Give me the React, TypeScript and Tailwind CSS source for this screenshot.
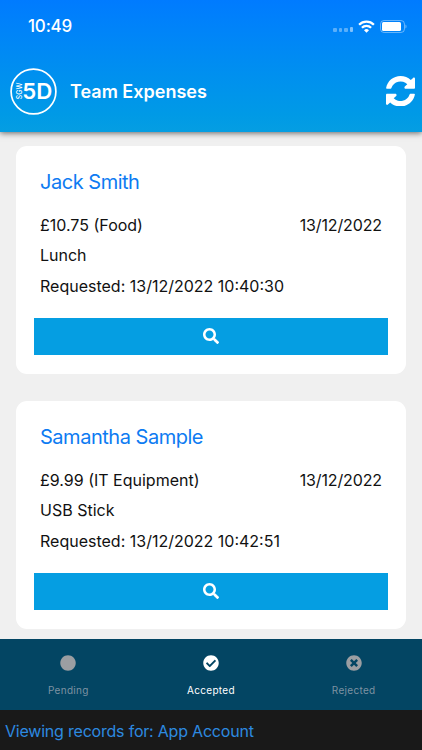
import type { ReactNode } from "react";
import { FaCheckCircle, FaCircle, FaSearch, FaTimesCircle } from "react-icons/fa";

type Expense = {
  name: string;
  amount: string;
  date: string;
  description: string;
  requested: string;
};

const expenses: Expense[] = [
  {
    name: "Jack Smith",
    amount: "£10.75 (Food)",
    date: "13/12/2022",
    description: "Lunch",
    requested: "13/12/2022 10:40:30",
  },
  {
    name: "Samantha Sample",
    amount: "£9.99 (IT Equipment)",
    date: "13/12/2022",
    description: "USB Stick",
    requested: "13/12/2022 10:42:51",
  },
];

function StatusBar() {
  return (
    <div className="flex h-[52px] items-center justify-between pl-7 pr-[15px] text-white">
      <span className="text-[17px] font-medium leading-none tracking-[-0.2px]">10:49</span>
      <div className="flex items-center">
        <div className="mt-[7px] flex items-end gap-[2px]">
          <i className="h-[3.5px] w-[3.5px] rounded-[1px] bg-white/35" />
          <i className="h-[3.5px] w-[3.5px] rounded-[1px] bg-white/35" />
          <i className="h-[3.5px] w-[3.5px] rounded-[1px] bg-white/35" />
          <i className="h-[4.5px] w-[3.5px] rounded-[1px] bg-white/50" />
        </div>
        <svg className="ml-[5px] h-[13px] w-[17px]" viewBox="0 0 17 13" fill="none" stroke="currentColor" strokeWidth="2.3">
          <path d="M1.1 4.7a10.5 10.5 0 0 1 14.8 0" />
          <path d="M3.9 7.7a6.5 6.5 0 0 1 9.2 0" />
          <path d="M8.5 12.8 6 10.2a3.6 3.6 0 0 1 5 0Z" fill="currentColor" stroke="none" />
        </svg>
        <svg className="ml-[5px] h-[13px] w-[27px]" viewBox="0 0 27 13">
          <rect x="0.5" y="0.5" width="24" height="12" rx="3.6" fill="none" stroke="white" strokeOpacity="0.4" />
          <rect x="2" y="2" width="19" height="9" rx="1.5" fill="white" />
          <path d="M25.5 4.5c1.3.5 1.3 3.5 0 4Z" fill="white" fillOpacity="0.5" />
        </svg>
      </div>
    </div>
  );
}

function Logo() {
  return (
    <svg className="h-[47px] w-[47px]" viewBox="0 0 47 47" fontFamily="Inter, sans-serif" fill="white">
      <circle cx="23.5" cy="23.5" r="22.4" fill="none" stroke="white" strokeWidth="1.7" />
      <text x="-31.2" y="11.6" transform="rotate(-90)" fontSize="7.2" fontWeight="500" textLength="16.5" lengthAdjust="spacingAndGlyphs">SGW</text>
      <text x="12.2" y="31" fontSize="21.8" fontWeight="600" textLength="30" lengthAdjust="spacingAndGlyphs">5D</text>
    </svg>
  );
}

function RefreshIcon() {
  const arrow =
    "M.9 12.8A.8.8 0 0 1 .1 11.9C1.4 5 7.4 0 14.5 0c4 0 7.600 1.500 10.300 4l2.300-2.100c.7-.7 1.900-.2 1.900.8v9c0 .6-.5 1.100-1.100 1.100h-8.200c-1.200 0-1.700-1.400-.9-2.200l2.500-2.300A9.600 9.600 0 0 0 5.400 12.100c-.1.4-.4.7-.8.7Z";
  return (
    <svg className="h-[30.5px] w-[29px]" viewBox="0 0 29 30.5" fill="currentColor">
      <path d={arrow} />
      <path d={arrow} transform="rotate(180 14.5 15.25)" />
    </svg>
  );
}

function ExpenseCard({ expense }: { expense: Expense }) {
  return (
    <article className="h-[228px] rounded-[11px] bg-white px-[18px] pt-[21px]">
      <div className="px-1.5">
        <h2 className="text-[20px] leading-[30px] tracking-[-0.48px] text-[#0d7bf2]">{expense.name}</h2>
        <div className="mt-[12.5px] text-[16px] leading-[30.5px] text-[#111]">
          <div className="flex justify-between">
            <span>{expense.amount}</span>
            <span className="tracking-[-0.12px]">{expense.date}</span>
          </div>
          <p>{expense.description}</p>
          <p>Requested: {expense.requested}</p>
        </div>
      </div>
      <button className="mt-[16.5px] flex h-[37px] w-full items-center justify-center bg-[#059ee2] text-white">
        <FaSearch size={16} />
      </button>
    </article>
  );
}

function Tab({ icon, label, active = false }: { icon: ReactNode; label: string; active?: boolean }) {
  return (
    <button className={`flex flex-1 flex-col items-center pt-4 ${active ? "text-white" : "text-[#9b9ea2]"}`}>
      {icon}
      <span className={`mt-[12px] text-[10px] leading-[14px] tracking-[0.3px] ${active ? "" : "text-[#7d92a2]"}`}>{label}</span>
    </button>
  );
}

export default function App() {
  return (
    <div className="flex h-[750px] w-[422px] flex-col overflow-hidden bg-[#f0f0f0] font-['Inter',sans-serif]">
      <header className="z-10 h-[132px] shrink-0 bg-linear-to-b from-[#007bff] to-[#059ee2] shadow-[0_1px_6px_rgba(0,0,0,0.6)]">
        <StatusBar />
        <div className="flex h-[78px] items-center pl-[10px] pr-[7px] text-white">
          <Logo />
          <h1 className="ml-[13px] flex-1 pt-px text-[18px] font-semibold leading-none">Team Expenses</h1>
          <RefreshIcon />
        </div>
      </header>
      <main className="flex min-h-0 flex-1 flex-col gap-[27px] overflow-hidden px-4 pt-[14px]">
        {expenses.map((expense) => (
          <ExpenseCard key={expense.name} expense={expense} />
        ))}
      </main>
      <nav className="-mx-[3px] flex h-[71px] shrink-0 bg-[#034563]">
        <Tab icon={<FaCircle size={16} />} label="Pending" />
        <Tab icon={<FaCheckCircle size={16} />} label="Accepted" active />
        <Tab icon={<FaTimesCircle size={16} />} label="Rejected" />
      </nav>
      <footer className="h-10 shrink-0 bg-[#191919] pl-[5px] pt-[6px] text-[16px] leading-[30px] tracking-[-0.21px] text-[#2d8ae0]">
        Viewing records for: App Account
      </footer>
    </div>
  );
}
